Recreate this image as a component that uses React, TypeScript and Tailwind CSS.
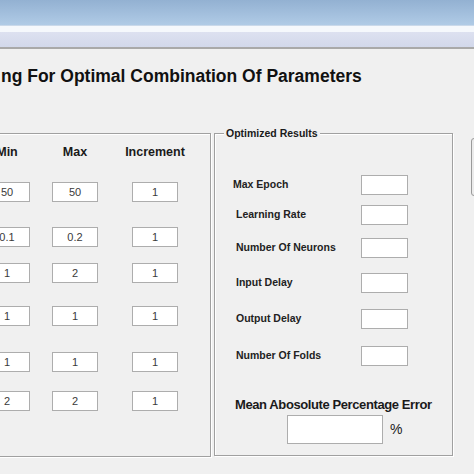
import React from 'react';

const leftRows = [
  { values: ['50', '50', '1'], mt: 'mt-[22px]' },
  { values: ['0.1', '0.2', '1'], mt: 'mt-[25px]' },
  { values: ['1', '2', '1'], mt: 'mt-[16px]' },
  { values: ['1', '1', '1'], mt: 'mt-[23px]' },
  { values: ['1', '1', '1'], mt: 'mt-[26px]' },
  { values: ['2', '2', '1'], mt: 'mt-[19px]' },
];

const rightRows = [
  { label: 'Max Epoch', mt: 'mt-[41px]', pl: 'pl-[18px]' },
  { label: 'Learning Rate', mt: 'mt-[10px]', pl: 'pl-[21px]' },
  { label: 'Number Of Neurons', mt: 'mt-[13px]', pl: 'pl-[21px]' },
  { label: 'Input Delay', mt: 'mt-[15px]', pl: 'pl-[21px]' },
  { label: 'Output Delay', mt: 'mt-[16px]', pl: 'pl-[21px]' },
  { label: 'Number Of Folds', mt: 'mt-[17px]', pl: 'pl-[21px]' },
];

const etched = 'border border-[#a0a0a0] shadow-[1px_1px_0_#ffffff,inset_1px_1px_0_#ffffff]';

function Field({ value = '', className = '' }: { value?: string; className?: string }) {
  return (
    <div
      className={`flex h-[20px] w-[46px] items-center justify-center border border-[#adadad] bg-white text-[11px] text-[#3a3a3a] ${className}`}
    >
      {value}
    </div>
  );
}

function Header({ children }: { children: string }) {
  return (
    <div className="flex w-[46px] justify-center whitespace-nowrap text-[12.5px] font-bold leading-[16px] text-[#1a1a1a]">
      {children}
    </div>
  );
}

export default function App() {
  return (
    <div
      className="h-[474px] w-[474px] overflow-hidden bg-[#f0f0f0]"
      style={{ fontFamily: '"Liberation Sans", Arial, sans-serif' }}
    >
      {/* window chrome */}
      <div className="h-[25px] bg-gradient-to-b from-[#93b1d2] to-[#b0cbe6]" />
      <div className="h-[7px] border-t border-[#cad9ea] bg-[#f5f8fc]" />
      <div className="h-[15px] bg-gradient-to-b from-[#dde1f0] to-[#d2d8eb]" />
      <div className="h-[2px] bg-[#a9a9a9]" />

      <div className="mt-[16px] whitespace-nowrap pl-[1px] text-[17.5px] font-bold leading-[22px] text-[#111]">
        ng For Optimal Combination Of Parameters
      </div>

      <div className="mt-[46px] flex items-start">
        {/* range panel, cut off on the left */}
        <div className={`-ml-[20px] h-[324px] w-[231px] shrink-0 pl-[3px] pt-[10px] ${etched}`}>
          <div className="grid grid-cols-[68px_80px_46px]">
            <Header>Min</Header>
            <Header>Max</Header>
            <Header>Increment</Header>
          </div>
          {leftRows.map((row, i) => (
            <div key={i} className={`grid grid-cols-[68px_80px_46px] ${row.mt}`}>
              {row.values.map((v, j) => (
                <Field key={j} value={v} />
              ))}
            </div>
          ))}
        </div>

        {/* optimized results */}
        <div className={`relative ml-[3px] h-[323px] w-[239px] shrink-0 ${etched}`}>
          <div className="absolute -top-[7px] left-[9px] bg-[#f0f0f0] px-[2px] text-[10.5px] font-bold leading-[13px] text-[#1a1a1a]">
            Optimized Results
          </div>
          {rightRows.map((row) => (
            <div key={row.label} className={`flex items-center pr-[44px] ${row.mt} ${row.pl}`}>
              <span className="text-[10.5px] font-bold text-[#222]">{row.label}</span>
              <Field className="ml-auto !w-[47px]" />
            </div>
          ))}
          <div className="mt-[31px] whitespace-nowrap pl-[20px] text-[13px] font-bold leading-[16px] tracking-[-0.4px] text-[#1a1a1a]">
            Mean Abosolute Percentage Error
          </div>
          <div className="mt-[2px] flex items-center pl-[72px]">
            <div className="h-[29px] w-[96px] border border-[#adadad] bg-white" />
            <span className="ml-[7px] text-[14px] text-[#222]">%</span>
          </div>
        </div>

        <div className="ml-[18px] mt-[5px] h-[58px] w-[20px] shrink-0 rounded-[3px] border border-[#9a9a9a] bg-[#ebebeb]" />
      </div>
    </div>
  );
}
